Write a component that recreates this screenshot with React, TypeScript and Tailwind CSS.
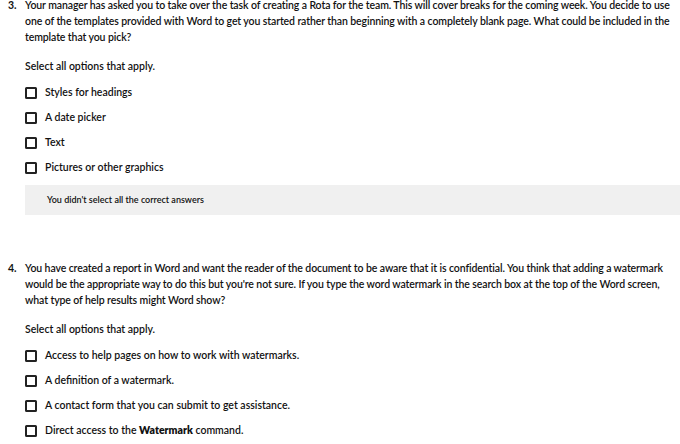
import React from 'react';

type Question = {
  num: string;
  text: string;
  options: React.ReactNode[];
  feedback?: string;
};

const questions: Question[] = [
  {
    num: '3.',
    text: 'Your manager has asked you to take over the task of creating a Rota for the team. This will cover breaks for the coming week. You decide to use one of the templates provided with Word to get you started rather than beginning with a completely blank page. What could be included in the template that you pick?',
    options: ['Styles for headings', 'A date picker', 'Text', 'Pictures or other graphics'],
    feedback: "You didn't select all the correct answers",
  },
  {
    num: '4.',
    text: "You have created a report in Word and want the reader of the document to be aware that it is confidential. You think that adding a watermark would be the appropriate way to do this but you're not sure. If you type the word watermark in the search box at the top of the Word screen, what type of help results might Word show?",
    options: [
      'Access to help pages on how to work with watermarks.',
      'A definition of a watermark.',
      'A contact form that you can submit to get assistance.',
      <>
        Direct access to the <span className="font-extrabold">Watermark</span> command.
      </>,
    ],
  },
];

const Checkbox: React.FC = () => (
  <span className="w-[12px] h-[12px] shrink-0 rounded-[1.5px] border-2 border-[#222] bg-white" />
);

const QuestionBlock: React.FC<{ q: Question }> = ({ q }) => (
  <div className="flex">
    <div className="w-[17px] shrink-0 text-[10.5px] font-bold leading-4">{q.num}</div>
    <div className="flex-1">
      <p className="leading-4 tracking-[-0.1px]">{q.text}</p>
      <p className="mt-[13px] leading-4">Select all options that apply.</p>
      <ul className="mt-[6px]">
        {q.options.map((opt, i) => (
          <li key={i} className="flex items-center gap-[8px] h-[25px]">
            <Checkbox />
            <span>{opt}</span>
          </li>
        ))}
      </ul>
      {q.feedback && (
        <div className="mt-[5px] h-[30px] bg-[#f0f0f0] flex items-center pl-[22px] text-[9px]">
          {q.feedback}
        </div>
      )}
    </div>
  </div>
);

const App: React.FC = () => {
  return (
    <div
      className="w-[680px] h-[444px] overflow-hidden bg-white text-[#111] text-[10.5px] font-semibold pl-[8px]"
      style={{ fontFamily: 'Lato, "Open Sans", sans-serif' }}
    >
      <div className="mt-[-3px]">
        <QuestionBlock q={questions[0]} />
      </div>
      <div className="mt-[45px]">
        <QuestionBlock q={questions[1]} />
      </div>
    </div>
  );
};

export default App;
